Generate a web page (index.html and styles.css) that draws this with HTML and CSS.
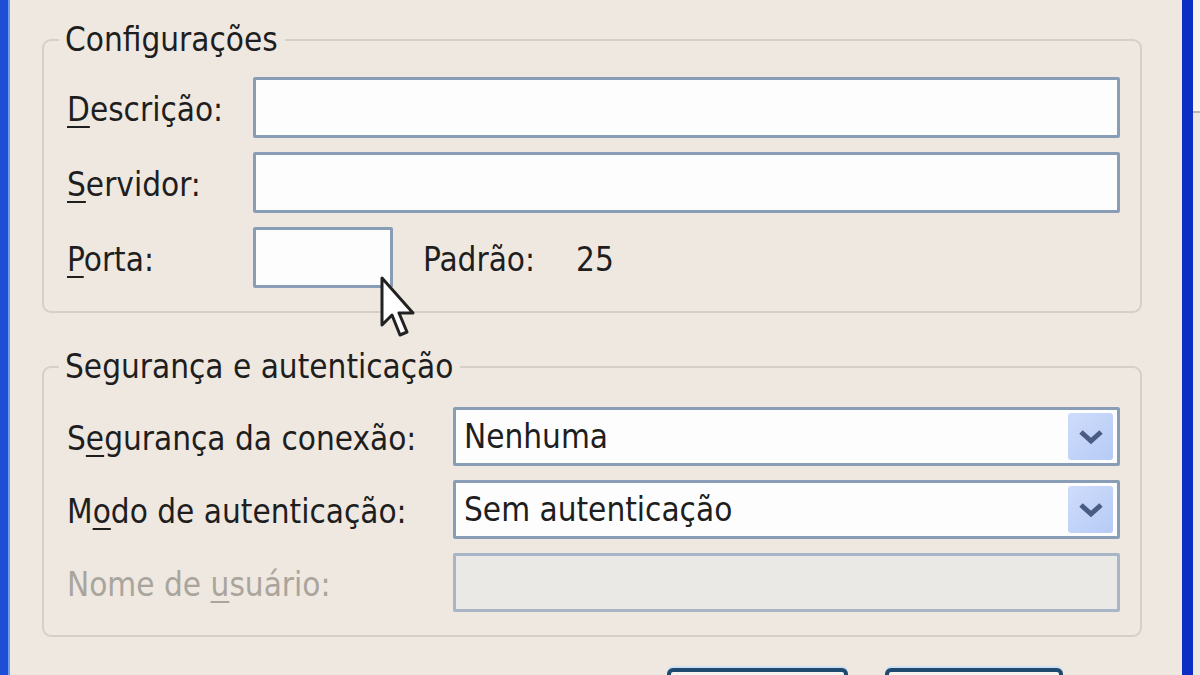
FILE: index.html
```html
<!DOCTYPE html>
<html lang="pt-BR">
<head>
    <meta charset="UTF-8">
    <meta name="viewport" content="width=device-width, initial-scale=1.0">
    <title>Servidor SMTP</title>
    <link rel="stylesheet" href="styles.css">
</head>
<body>
    <div class="window">
        <fieldset class="group">
            <legend>Configurações</legend>
            <div class="row">
                <label class="label"><u>D</u>escrição:</label>
                <div class="field"></div>
            </div>
            <div class="row">
                <label class="label"><u>S</u>ervidor:</label>
                <div class="field"></div>
            </div>
            <div class="row">
                <label class="label"><u>P</u>orta:</label>
                <div class="field port">
                    <svg class="cursor" width="40" height="64" viewBox="0 0 40 64">
                        <path d="M3 2 L3 49 L13 39 L21 59 L28 56 L20 37 L34 37 Z" fill="#fff" stroke="#222" stroke-width="3" stroke-linejoin="round"/>
                    </svg>
                </div>
                <span class="default-label">Padrão:</span>
                <span class="default-value">25</span>
            </div>
        </fieldset>

        <fieldset class="group security">
            <legend>Segurança e autenticação</legend>
            <div class="row">
                <label class="label">S<u>e</u>gurança da conexão:</label>
                <div class="field select">
                    <span class="value">Nenhuma</span>
                    <span class="drop">
                        <svg width="26" height="16" viewBox="0 0 26 16"><path d="M3 3 L13 12 L23 3" fill="none" stroke="#4a5c82" stroke-width="5"/></svg>
                    </span>
                </div>
            </div>
            <div class="row">
                <label class="label">M<u>o</u>do de autenticação:</label>
                <div class="field select">
                    <span class="value">Sem autenticação</span>
                    <span class="drop">
                        <svg width="26" height="16" viewBox="0 0 26 16"><path d="M3 3 L13 12 L23 3" fill="none" stroke="#4a5c82" stroke-width="5"/></svg>
                    </span>
                </div>
            </div>
            <div class="row">
                <label class="label disabled">Nome de <u>u</u>suário:</label>
                <div class="field disabled-field"></div>
            </div>
        </fieldset>

        <div class="buttons">
            <button class="btn ok"></button>
            <button class="btn cancel"></button>
        </div>
    </div>
    <div class="desktop">
        <div class="desktop-top"></div>
    </div>
</body>
</html>
```

FILE: styles.css
```css
* {
    margin: 0;
    padding: 0;
    box-sizing: border-box;
}

body {
    display: flex;
    width: 1200px;
    height: 675px;
    overflow: hidden;
    background: #ede7e0;
    font-family: "DejaVu Sans Condensed", "DejaVu Sans", sans-serif;
    font-size: 33px;
    color: #1e1e1e;
}

.window {
    width: 1193px;
    height: 675px;
    padding: 20px 40px 0 34px;
    background: #eee8e1;
    border-left: 8px solid #1c4fd6;
    border-right: 11px solid #0b2fc2;
    box-shadow: inset 2px 0 0 #6f9cf0;
}

.group {
    border: 2px solid #d4d0c8;
    border-radius: 9px;
    padding: 17px 20px 23px 23px;
}

.group legend {
    margin-left: -8px;
    padding: 0 7px 0 6px;
    line-height: 40px;
}

.security {
    margin-top: 34px;
    padding-top: 20px;
}

.row {
    display: flex;
    align-items: center;
    height: 61px;
    margin-bottom: 14px;
    padding-top: 3px;
}

.row:last-child {
    margin-bottom: 0;
}

.security .row {
    height: 59px;
}

.label {
    width: 186px;
    flex-shrink: 0;
}

.security .label {
    width: 386px;
}

.label u {
    text-decoration-thickness: 2px;
    text-underline-offset: 5px;
}

.field {
    flex: 1;
    align-self: stretch;
    margin-top: -3px;
    background: #fdfdfd;
    border: 3px solid #8a9db6;
    border-radius: 2px;
}

.port {
    flex: none;
    width: 140px;
    position: relative;
}

.cursor {
    position: absolute;
    left: 123px;
    top: 46px;
}

.default-label {
    margin-left: 30px;
    width: 153px;
}

.select {
    display: flex;
    align-items: center;
    padding: 0 4px 0 8px;
}

.select .value {
    flex: 1;
}

.drop {
    width: 45px;
    height: 47px;
    display: flex;
    align-items: center;
    justify-content: center;
    background: linear-gradient(135deg, #cfdcfb, #b6cbf6);
    border-radius: 3px;
}

.disabled {
    color: #aaa59c;
}

.disabled-field {
    background: #ebe9e6;
    border-color: #a8b6c8;
}

.buttons {
    display: flex;
    justify-content: flex-end;
    gap: 37px;
    padding-right: 79px;
    margin-top: 31px;
}

.btn {
    height: 60px;
    background: #f4f3ee;
    border: 4px solid #1f4a70;
    border-radius: 6px;
    box-shadow: 0 -2px 0 #cfe0f2;
}

.ok {
    width: 181px;
}

.cancel {
    width: 178px;
}

.desktop {
    flex: 1;
    background: #ebe7e2;
}

.desktop-top {
    height: 113px;
    background: #f5f3f0;
    border-bottom: 2px solid #b9b6b1;
}
```
